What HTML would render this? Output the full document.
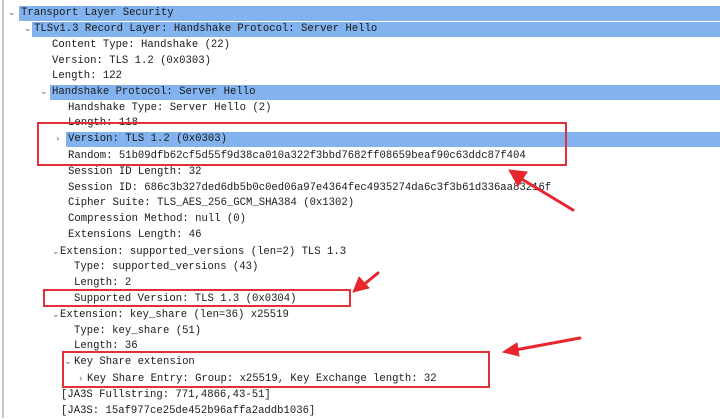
<!DOCTYPE html>
<html><head><style>
body{margin:0;width:720px;height:418px;background:#fff;position:relative;overflow:hidden;font-family:"Liberation Mono",monospace;font-size:10.6px;color:#1a1a1a}
.r{position:absolute;height:15px;line-height:15px;white-space:pre;margin-top:2px}
.hl{background:#82b3ef;right:0}
.a{position:absolute;color:#666;font-size:9px;line-height:15px;margin-top:2px}
.box{position:absolute;border:2px solid #e0303a;box-sizing:border-box}
.lb{position:absolute;left:2px;top:0;width:2px;height:418px;background:#c8c8c8}
</style></head><body>
<div class="lb"></div>
<div class="r hl" style="top:4px;left:19px;padding-left:2px">Transport Layer Security</div>
<div class="a" style="top:4px;left:8px">&#8964;</div>
<div class="r hl" style="top:20px;left:32px;padding-left:2px">TLSv1.3 Record Layer: Handshake Protocol: Server Hello</div>
<div class="a" style="top:20px;left:24px">&#8964;</div>
<div class="r" style="top:36px;left:52px">Content Type: Handshake (22)</div>
<div class="r" style="top:52px;left:52px">Version: TLS 1.2 (0x0303)</div>
<div class="r" style="top:67px;left:52px">Length: 122</div>
<div class="r hl" style="top:83px;left:50px;padding-left:2px">Handshake Protocol: Server Hello</div>
<div class="a" style="top:83px;left:40px">&#8964;</div>
<div class="r" style="top:99px;left:68px">Handshake Type: Server Hello (2)</div>
<div class="r" style="top:114px;left:68px">Length: 118</div>
<div class="r hl" style="top:130px;left:66px;padding-left:2px">Version: TLS 1.2 (0x0303)</div>
<div class="a" style="top:130px;left:55px">&#8250;</div>
<div class="r" style="top:147px;left:68px">Random: 51b09dfb62cf5d55f9d38ca010a322f3bbd7682ff08659beaf90c63ddc87f404</div>
<div class="r" style="top:163px;left:68px">Session ID Length: 32</div>
<div class="r" style="top:179px;left:68px">Session ID: 686c3b327ded6db5b0c0ed06a97e4364fec4935274da6c3f3b61d336aa83216f</div>
<div class="r" style="top:194px;left:68px">Cipher Suite: TLS_AES_256_GCM_SHA384 (0x1302)</div>
<div class="r" style="top:210px;left:68px">Compression Method: null (0)</div>
<div class="r" style="top:226px;left:68px">Extensions Length: 46</div>
<div class="r" style="top:243px;left:60px">Extension: supported_versions (len=2) TLS 1.3</div>
<div class="a" style="top:243px;left:52px">&#8964;</div>
<div class="r" style="top:258px;left:74px">Type: supported_versions (43)</div>
<div class="r" style="top:274px;left:74px">Length: 2</div>
<div class="r" style="top:290px;left:74px">Supported Version: TLS 1.3 (0x0304)</div>
<div class="r" style="top:306px;left:60px">Extension: key_share (len=36) x25519</div>
<div class="a" style="top:306px;left:52px">&#8964;</div>
<div class="r" style="top:322px;left:74px">Type: key_share (51)</div>
<div class="r" style="top:337px;left:74px">Length: 36</div>
<div class="r" style="top:353px;left:74px">Key Share extension</div>
<div class="a" style="top:353px;left:64px">&#8964;</div>
<div class="r" style="top:370px;left:87px">Key Share Entry: Group: x25519, Key Exchange length: 32</div>
<div class="a" style="top:370px;left:78px">&#8250;</div>
<div class="r" style="top:386px;left:61px">[JA3S Fullstring: 771,4866,43-51]</div>
<div class="r" style="top:402px;left:61px">[JA3S: 15af977ce25de452b96affa2addb1036]</div>
<div class="box" style="left:37px;top:122px;width:530px;height:44px"></div>
<div class="box" style="left:43px;top:289px;width:308px;height:18px"></div>
<div class="box" style="left:62px;top:351px;width:428px;height:37px"></div>
<svg style="position:absolute;left:0;top:0" width="720" height="418">
<g stroke="#e8262e" stroke-width="3" fill="#e8262e" stroke-linecap="round">
<line x1="573" y1="210" x2="520" y2="178"/><polygon points="509,170 527,172 518,186" stroke-width="1"/>
<line x1="378" y1="273" x2="362" y2="286"/><polygon points="353,292 359,277 369,288" stroke-width="1"/>
<line x1="580" y1="338" x2="515" y2="350"/><polygon points="503,352 517,343 519,356" stroke-width="1"/>
</g></svg>
</body></html>
